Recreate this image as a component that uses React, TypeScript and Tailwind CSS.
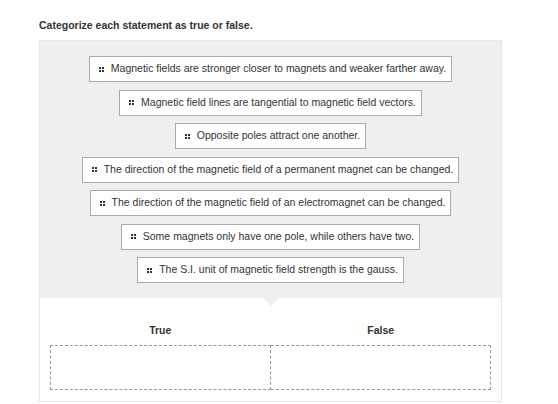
const statements = [
  'Magnetic fields are stronger closer to magnets and weaker farther away.',
  'Magnetic field lines are tangential to magnetic field vectors.',
  'Opposite poles attract one another.',
  'The direction of the magnetic field of a permanent magnet can be changed.',
  'The direction of the magnetic field of an electromagnet can be changed.',
  'Some magnets only have one pole, while others have two.',
  'The S.I. unit of magnetic field strength is the gauss.',
];

function Grip() {
  return (
    <svg width="5" height="5" viewBox="0 0 5 5" className="shrink-0">
      <rect x="0" y="0" width="2" height="2" fill="#333" />
      <rect x="3" y="0" width="2" height="2" fill="#333" />
      <rect x="0" y="3" width="2" height="2" fill="#333" />
      <rect x="3" y="3" width="2" height="2" fill="#333" />
    </svg>
  );
}

export default function App() {
  return (
    <div className="w-[558px] h-[404px] bg-white text-[#333] font-['Liberation_Sans',Arial,sans-serif]">
      <div className="pl-[39px] pt-[17px]">
        <p className="text-[10.5px] font-bold leading-[16px] h-[23px]">Categorize each statement as true or false.</p>
        <div className="w-[463px] border border-[#e6e6e6]">
          <div className="relative bg-[#efefef] flex flex-col items-center gap-[7.5px] pt-[15px] pb-[15px]">
            {statements.map((s) => (
              <div
                key={s}
                className="h-[26px] flex items-center gap-[7px] bg-white border border-[#aaa] pl-[9px] pr-[5px] text-[10.5px]"
              >
                <Grip />
                <span>{s}</span>
              </div>
            ))}
            <div className="absolute left-[223px] -bottom-[8px] w-0 h-0 border-l-[8px] border-r-[8px] border-t-[8px] border-l-transparent border-r-transparent border-t-[#efefef]" />
          </div>
          <div className="bg-white px-[10px] pt-[25px] pb-[11px]">
            <div className="grid grid-cols-2">
              <p className="text-center text-[10.5px] font-bold h-[22px]">True</p>
              <p className="text-center text-[10.5px] font-bold h-[22px]">False</p>
              <div className="h-[45px] border border-dashed border-[#999]" />
              <div className="h-[45px] border border-dashed border-[#999] border-l-0" />
            </div>
          </div>
        </div>
      </div>
    </div>
  );
}
